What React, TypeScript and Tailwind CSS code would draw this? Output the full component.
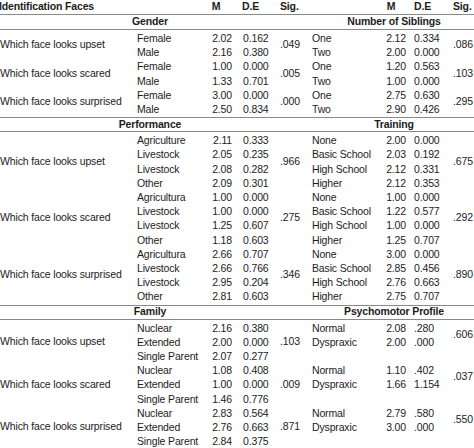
type Row = [string, string, string];

type Group = {
  label: string;
  left: Row[];
  leftSig: string;
  right: Row[];
  rightSig: string;
  rightSigRows?: number;
};

type Section = {
  left: string;
  right: string;
  groups: Group[];
};

const sections: Section[] = [
  {
    left: "Gender",
    right: "Number of Siblings",
    groups: [
      {
        label: "Which face looks upset",
        left: [["Female", "2.02", "0.162"], ["Male", "2.16", "0.380"]],
        leftSig: ".049",
        right: [["One", "2.12", "0.334"], ["Two", "2.00", "0.000"]],
        rightSig: ".086",
      },
      {
        label: "Which face looks scared",
        left: [["Female", "1.00", "0.000"], ["Male", "1.33", "0.701"]],
        leftSig: ".005",
        right: [["One", "1.20", "0.563"], ["Two", "1.00", "0.000"]],
        rightSig: ".103",
      },
      {
        label: "Which face looks surprised",
        left: [["Female", "3.00", "0.000"], ["Male", "2.50", "0.834"]],
        leftSig: ".000",
        right: [["One", "2.75", "0.630"], ["Two", "2.90", "0.426"]],
        rightSig: ".295",
      },
    ],
  },
  {
    left: "Performance",
    right: "Training",
    groups: [
      {
        label: "Which face looks upset",
        left: [
          ["Agriculture", "2.11", "0.333"],
          ["Livestock", "2.05", "0.235"],
          ["Livestock", "2.08", "0.282"],
          ["Other", "2.09", "0.301"],
        ],
        leftSig: ".966",
        right: [
          ["None", "2.00", "0.000"],
          ["Basic School", "2.03", "0.192"],
          ["High School", "2.12", "0.331"],
          ["Higher", "2.12", "0.353"],
        ],
        rightSig: ".675",
      },
      {
        label: "Which face looks scared",
        left: [
          ["Agricultura", "1.00", "0.000"],
          ["Livestock", "1.00", "0.000"],
          ["Livestock", "1.25", "0.607"],
          ["Other", "1.18", "0.603"],
        ],
        leftSig: ".275",
        right: [
          ["None", "1.00", "0.000"],
          ["Basic School", "1.22", "0.577"],
          ["High School", "1.00", "0.000"],
          ["Higher", "1.25", "0.707"],
        ],
        rightSig: ".292",
      },
      {
        label: "Which face looks surprised",
        left: [
          ["Agricultura", "2.66", "0.707"],
          ["Livestock", "2.66", "0.766"],
          ["Livestock", "2.95", "0.204"],
          ["Other", "2.81", "0.603"],
        ],
        leftSig: ".346",
        right: [
          ["None", "3.00", "0.000"],
          ["Basic School", "2.85", "0.456"],
          ["High School", "2.76", "0.663"],
          ["Higher", "2.75", "0.707"],
        ],
        rightSig: ".890",
      },
    ],
  },
  {
    left: "Family",
    right: "Psychomotor Profile",
    groups: [
      {
        label: "Which face looks upset",
        left: [
          ["Nuclear", "2.16", "0.380"],
          ["Extended", "2.00", "0.000"],
          ["Single Parent", "2.07", "0.277"],
        ],
        leftSig: ".103",
        right: [["Normal", "2.08", ".280"], ["Dyspraxic", "2.00", ".000"], ["", "", ""]],
        rightSig: ".606",
        rightSigRows: 2,
      },
      {
        label: "Which face looks scared",
        left: [
          ["Nuclear", "1.08", "0.408"],
          ["Extended", "1.00", "0.000"],
          ["Single Parent", "1.46", "0.776"],
        ],
        leftSig: ".009",
        right: [["Normal", "1.10", ".402"], ["Dyspraxic", "1.66", "1.154"], ["", "", ""]],
        rightSig: ".037",
        rightSigRows: 2,
      },
      {
        label: "Which face looks surprised",
        left: [
          ["Nuclear", "2.83", "0.564"],
          ["Extended", "2.76", "0.663"],
          ["Single Parent", "2.84", "0.375"],
        ],
        leftSig: ".871",
        right: [["Normal", "2.79", ".580"], ["Dyspraxic", "3.00", ".000"], ["", "", ""]],
        rightSig: ".550",
        rightSigRows: 2,
      },
    ],
  },
];

// fixed heights per row count (14.2px per row)
const heights: Record<number, string> = {
  1: "h-[14.2px]",
  2: "h-[28.4px]",
  3: "h-[42.6px]",
  4: "h-[56.8px]",
};

function Cells({ rows, right }: { rows: Row[]; right?: boolean }) {
  return (
    <div className="flex shrink-0 flex-col">
      {rows.map(([cat, m, de], i) => (
        <div key={i} className="flex h-[14.2px] leading-[14.2px] whitespace-nowrap">
          <div className={right ? "w-[64px] shrink-0" : "w-[63px] shrink-0"}>{cat}</div>
          <div className={right ? "w-[30px] shrink-0 text-right" : "w-[32px] shrink-0 text-right"}>{m}</div>
          <div className={right ? "w-[47px] shrink-0 pl-[8px]" : "w-[48px] shrink-0 pl-[11px]"}>{de}</div>
        </div>
      ))}
    </div>
  );
}

function GroupRow({ g }: { g: Group }) {
  const h = heights[g.left.length];
  return (
    <div className={`flex ${h}`}>
      <div className="flex w-[137px] shrink-0 items-center whitespace-nowrap">{g.label}</div>
      <Cells rows={g.left} />
      <div className="flex w-[32px] shrink-0 items-center">{g.leftSig}</div>
      <Cells rows={g.right} right />
      <div className="flex w-[40px] shrink-0 flex-col">
        <div className={`flex items-center ${heights[g.rightSigRows ?? g.right.length]}`}>
          {g.rightSig}
        </div>
      </div>
    </div>
  );
}

function SectionHead({ s, first }: { s: Section; first: boolean }) {
  return (
    <div
      className={`flex h-[15px] items-center border-b border-[#8a8a8a] font-bold ${
        first ? "" : "mt-[1px] border-t"
      }`}
    >
      <div className="ml-[90px] flex w-[120px] shrink-0 justify-center whitespace-nowrap">{s.left}</div>
      <div className="ml-[124px] flex w-[120px] shrink-0 justify-center whitespace-nowrap">{s.right}</div>
    </div>
  );
}

export default function App() {
  return (
    <div className="h-[448px] w-[474px] overflow-hidden bg-white font-['Liberation_Sans',Arial,sans-serif] text-[10.5px] tracking-[-0.15px] text-[#1c1c1c]">
      <div className="flex h-[15px] items-center border-b border-[#8a8a8a] font-bold whitespace-nowrap">
        <div className="-ml-[1px] w-[201px] shrink-0">Identification Faces</div>
        <div className="w-[32px] shrink-0 text-center">M</div>
        <div className="w-[48px] shrink-0 pl-[10px]">D.E</div>
        <div className="w-[32px] shrink-0">Sig.</div>
        <div className="w-[64px] shrink-0"></div>
        <div className="w-[30px] shrink-0 text-center">M</div>
        <div className="w-[47px] shrink-0 pl-[8px]">D.E</div>
        <div className="w-[40px] shrink-0">Sig.</div>
      </div>
      {sections.map((s, i) => (
        <div key={s.left}>
          <SectionHead s={s} first={i === 0} />
          <div className="pt-[1px]">
            {s.groups.map((g, j) => (
              <GroupRow key={j} g={g} />
            ))}
          </div>
        </div>
      ))}
    </div>
  );
}
